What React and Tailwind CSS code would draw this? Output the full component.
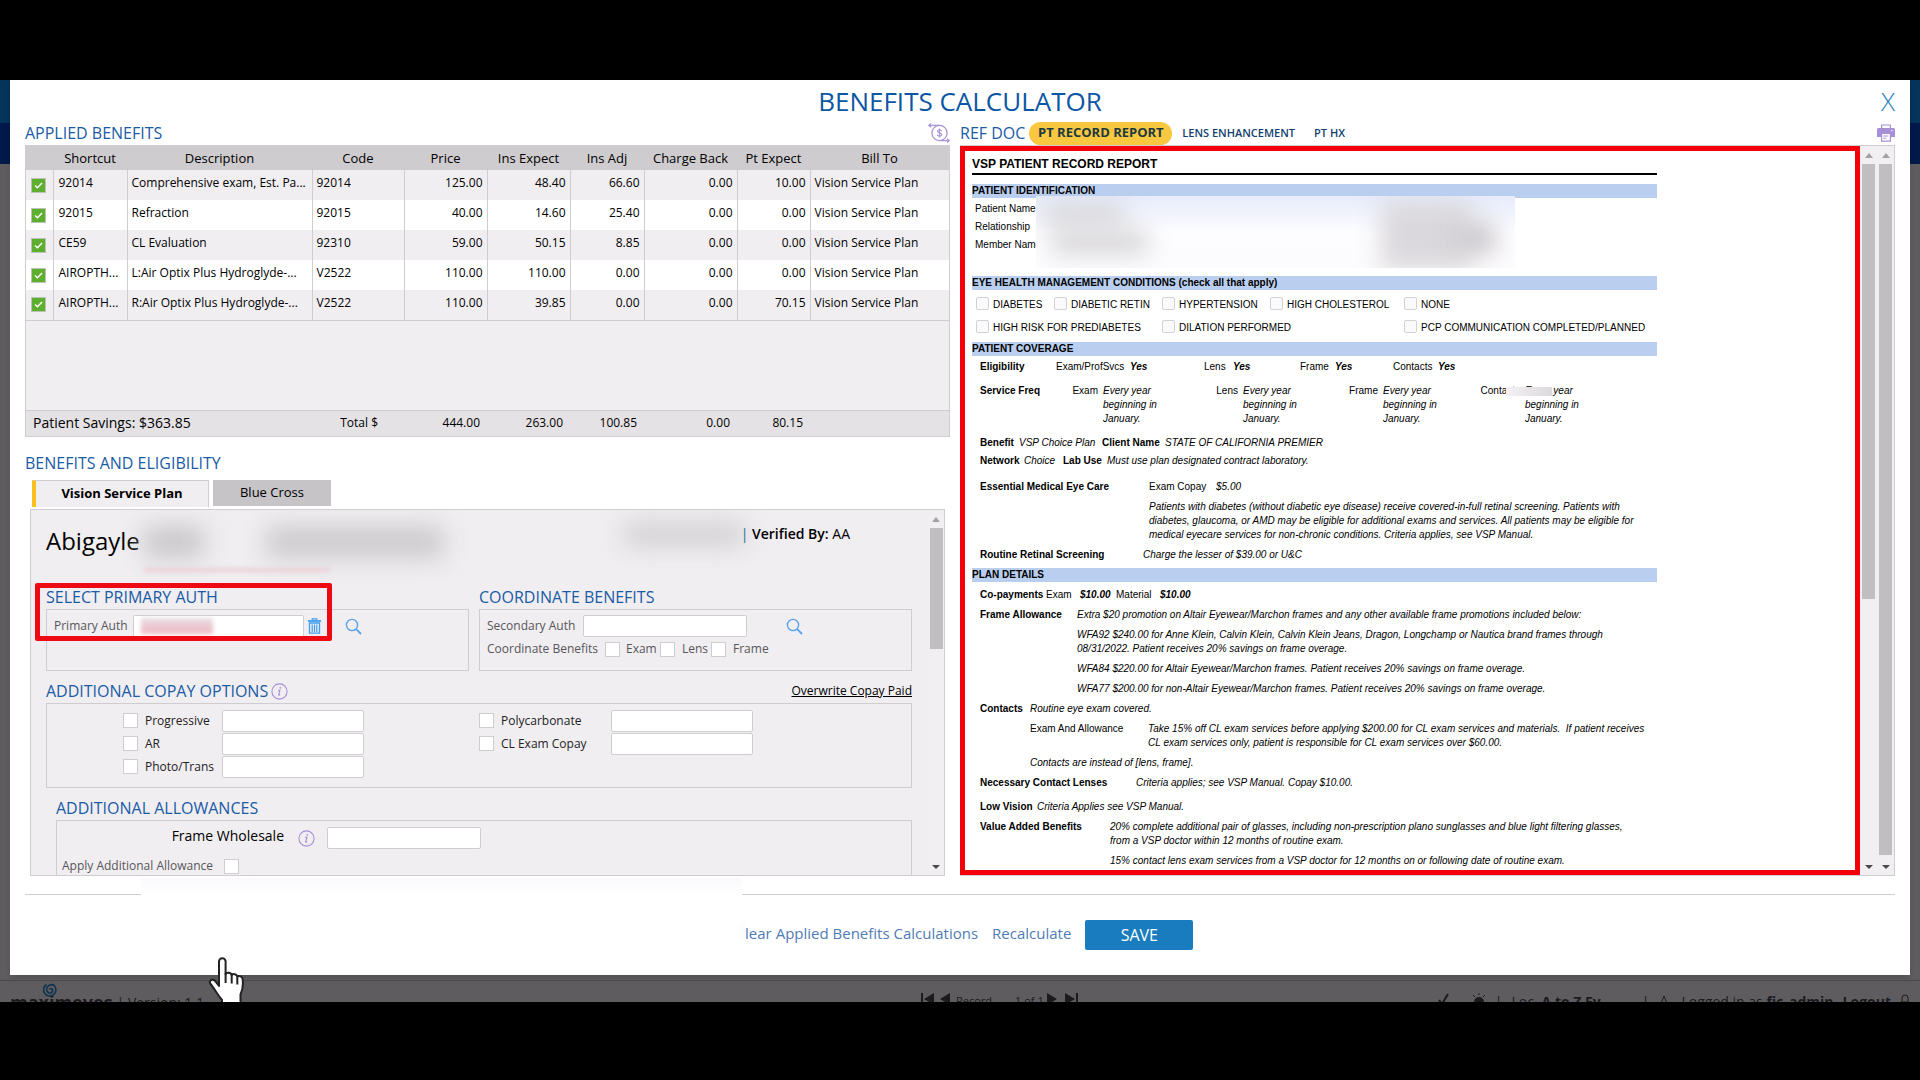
import { useState } from 'react'

const claimLines = [
    { shortcut: '92014', description: 'Comprehensive exam, Est. Pa...', code: '92014', amounts: ['125.00', '48.40', '66.60', '0.00', '10.00'] },
    { shortcut: '92015', description: 'Refraction', code: '92015', amounts: ['40.00', '14.60', '25.40', '0.00', '0.00'] },
    { shortcut: 'CE59', description: 'CL Evaluation', code: '92310', amounts: ['59.00', '50.15', '8.85', '0.00', '0.00'] },
    { shortcut: 'AIROPTH...', description: 'L:Air Optix Plus Hydroglyde-...', code: 'V2522', amounts: ['110.00', '110.00', '0.00', '0.00', '0.00'] },
    { shortcut: 'AIROPTH...', description: 'R:Air Optix Plus Hydroglyde-...', code: 'V2522', amounts: ['110.00', '39.85', '0.00', '0.00', '70.15'] },
]

const columns = [
    { label: '', width: 'w-[27px]' },
    { label: 'Shortcut', width: 'w-[74px]' },
    { label: 'Description', width: 'w-[185px]' },
    { label: 'Code', width: 'w-[92px]' },
    { label: 'Price', width: 'w-[83px]' },
    { label: 'Ins Expect', width: 'w-[83px]' },
    { label: 'Ins Adj', width: 'w-[74px]' },
    { label: 'Charge Back', width: 'w-[93px]' },
    { label: 'Pt Expect', width: 'w-[73px]' },
    { label: 'Bill To', width: '' },
]

const totals = ['444.00', '263.00', '100.85', '0.00', '80.15']

function CheckBox({ className = '', ...props }) {
    return (
        <input
            type="checkbox"
            className={`size-[15px] shrink-0 appearance-none border border-[#cfcdd0] bg-white ${className}`}
            {...props}
        />
    )
}

function LineCheck({ label }) {
    const [checked, setChecked] = useState(true)
    return (
        <span className="grid size-[15px] place-items-center">
            <input
                type="checkbox"
                aria-label={label}
                checked={checked}
                onChange={(e) => setChecked(e.target.checked)}
                className="col-start-1 row-start-1 size-[15px] appearance-none border border-[#b9c4b4] bg-white checked:bg-[#5eae2f]"
            />
            {checked && (
                <svg viewBox="0 0 10 8" className="pointer-events-none col-start-1 row-start-1 h-[7px] w-[9px]" fill="none" stroke="#fff" strokeWidth="1.6">
                    <path d="M1 4l2.8 2.6L9 1.2" />
                </svg>
            )}
        </span>
    )
}

function TextBox({ className = '', ...props }) {
    return <input type="text" className={`h-[22px] rounded-xs border border-[#cfcdd0] bg-white px-1 text-xs ${className}`} {...props} />
}

function Heading({ children }) {
    return <h2 className="text-base leading-6 whitespace-nowrap text-[#1a5ba6]">{children}</h2>
}

function InfoIcon() {
    return (
        <svg viewBox="0 0 17 17" className="size-[17px] shrink-0" fill="none" stroke="#a78fd8">
            <circle cx="8.5" cy="8.5" r="7.6" strokeWidth="1.1" />
            <path d="M7 7.2h1.9l-1.2 4.6c-.1.5.5.5 1.3-.2" strokeWidth="1.1" />
            <circle cx="9.3" cy="4.8" r=".6" fill="#a78fd8" strokeWidth=".6" />
        </svg>
    )
}

function SearchIcon() {
    return (
        <svg viewBox="0 0 17 17" className="size-[17px]" fill="none" stroke="#5aa2ec" strokeWidth="1.4">
            <circle cx="7" cy="7" r="5.6" />
            <path d="M11.2 11.2l4.8 4.8" strokeWidth="1.8" />
        </svg>
    )
}

function TrashIcon() {
    return (
        <svg viewBox="0 0 13 16" className="h-4 w-[13px]" fill="none" stroke="#3f9fee">
            <path d="M4.2 2.2V.8h4.6v1.4" strokeWidth="1.2" />
            <path d="M0 3h13" strokeWidth="1.8" />
            <path d="M1.5 5v10.2h10V5z" strokeWidth="1.3" />
            <path d="M4.2 6.5v7.5M6.5 6.5v7.5M8.8 6.5v7.5" strokeWidth="1.2" />
        </svg>
    )
}

function DollarCycleIcon() {
    return (
        <svg viewBox="0 0 22 20" className="h-5 w-[22px]" fill="none" stroke="#a893d6" strokeWidth="1.3">
            <circle cx="11.500" cy="10" r="7.600" />
            <path d="M1 2.400h10.500M11.500 17.600H21" />
            <path d="M3 .5L.8 2.400 3 4.300M19 15.700l2.200 1.900-2.200 1.900" />
            <path d="M13.600 8.200c-.3-1-1.100-1.400-2.100-1.400s-2 .5-2 1.500c0 2.200 4.200 1 4.200 3.300 0 1.100-1 1.600-2.200 1.600-1.100 0-2-.5-2.300-1.500M11.500 5.400v9.200" strokeWidth="1.100" />
        </svg>
    )
}

function PrinterIcon() {
    return (
        <svg viewBox="0 0 18 18" className="size-[18px]">
            <path d="M4.600 5V1h8.800v4" fill="#fff" stroke="#a78fd8" strokeWidth="1.200" />
            <path d="M0 5.500Q0 4 1.500 4h15Q18 4 18 5.500V13H0z" fill="#a78fd8" />
            <path d="M4.600 9.500h8.800v7.700H4.600z" fill="#fff" stroke="#a78fd8" strokeWidth="1.200" />
            <path d="M6.300 12h5M6.300 14.200h3" stroke="#a78fd8" />
            <path d="M14 6.600h1.500" stroke="#fff" />
        </svg>
    )
}

function ScrollBar({ thumb, className = '' }) {
    return (
        <div aria-hidden="true" className={`flex shrink-0 flex-col items-center bg-[#f1eff2] ${className}`}>
            <svg viewBox="0 0 8 18" className="h-[18px] w-2" fill="#a3a1a4">
                <path d="M4 7l4 5H0z" />
            </svg>
            <div className="w-[13px] flex-1">
                <div className={`bg-[#c0bec1] ${thumb}`} />
            </div>
            <svg viewBox="0 0 8 20" className="h-5 w-2" fill="#4b494c">
                <path d="M0 10h8l-4 4z" />
            </svg>
        </div>
    )
}

function AppliedBenefits() {
    return (
        <section>
            <div className="flex h-6 items-center justify-between">
                <Heading>APPLIED BENEFITS</Heading>
                <button type="button" aria-label="Payment history">
                    <DollarCycleIcon />
                </button>
            </div>
            <div className="flex h-[292px] flex-col border border-[#cfcdd0] bg-[#f0eef1] text-xs text-black">
                <table className="w-full table-fixed border-collapse">
                    <thead>
                        <tr className="h-[24px] bg-[#cfcccf]">
                            {columns.map((col) => (
                                <th key={col.label} className={`${col.width} p-0 pt-[2px] text-[13px] font-medium whitespace-nowrap`}>{col.label}</th>
                            ))}
                        </tr>
                    </thead>
                    <tbody>
                        {claimLines.map((line, i) => (
                            <tr key={i} className="h-[30px] border-[#cfcdd0] last:border-b odd:bg-[#f0eef1] even:bg-white">
                                <td className="border-r border-[#cfcdd0] pl-[5px]">
                                    <LineCheck label={`Apply ${line.description}`} />
                                </td>
                                <td className="border-r border-[#cfcdd0] pb-1 pl-[5px] whitespace-nowrap">{line.shortcut}</td>
                                <td className="border-r border-[#cfcdd0] pb-1 pl-1 whitespace-nowrap">{line.description}</td>
                                <td className="border-r border-[#cfcdd0] pb-1 pl-1">{line.code}</td>
                                {line.amounts.map((amount, j) => (
                                    <td key={j} className="border-r border-[#cfcdd0] pr-1 pb-1 text-right">{amount}</td>
                                ))}
                                <td className="pb-1 pl-1 whitespace-nowrap">Vision Service Plan</td>
                            </tr>
                        ))}
                    </tbody>
                </table>
                <table className="mt-auto w-full table-fixed border-t border-[#cfcdd0] bg-[#e4e2e5]">
                    <tbody>
                        <tr className="h-[26px]">
                            <td className="w-[286px] pl-[7px] text-sm">Patient Savings: $363.85</td>
                            <td className="w-[92px] pr-[26px] text-right">Total $</td>
                            {totals.map((total, i) => (
                                <td key={i} className={`${columns[i + 4].width} pr-[7px] text-right`}>{total}</td>
                            ))}
                            <td />
                        </tr>
                    </tbody>
                </table>
            </div>
        </section>
    )
}

function CopayOption({ id, label, labelWidth }) {
    return (
        <div className="flex h-[23px] items-center">
            <div className={`flex items-center gap-[7px] ${labelWidth}`}>
                <CheckBox id={id} />
                <label htmlFor={id} className="whitespace-nowrap text-[#222]">{label}</label>
            </div>
            <TextBox aria-label={`${label} copay`} className="w-[142px]" />
        </div>
    )
}

function PlanForm() {
    return (
        <div className="min-w-0 flex-1 overflow-hidden pr-4 pl-[15px] text-xs text-[#58565a]">
            <div className="relative flex h-[75px] items-start justify-between pt-[15px] pr-[62px]">
                {/* masked member details */}
                <div className="absolute top-4 left-[98px] h-8 w-[60px] bg-[#c9c7ca] blur-md" />
                <div className="absolute top-4 left-[220px] h-8 w-[178px] bg-[#cccacd] blur-md" />
                <div className="absolute top-3 left-[578px] h-6 w-[120px] bg-[#d2d0d3] blur-md" />
                <div className="absolute top-[58px] left-[98px] h-1 w-[186px] bg-[#eccfd4] blur-[2px]" />
                <span className="text-2xl leading-8 text-black">Abigayle</span>
                <span className="relative -mt-[3px] text-sm leading-6 whitespace-nowrap text-black">
                    <span className="text-[#23718c]">|</span> <b className="font-semibold">Verified By:</b> AA
                </span>
            </div>

            <div className="grid grid-cols-[423fr_433fr] gap-[10px]">
                <section className="relative">
                    <Heading>SELECT PRIMARY AUTH</Heading>
                    <div className="h-[62px] border border-[#cfcdd0] pt-[5px] pl-[7px]">
                        <div className="flex h-[22px] items-center">
                            <label htmlFor="primary-auth" className="w-[79px] whitespace-nowrap">Primary Auth</label>
                            <div className="relative flex">
                                <TextBox id="primary-auth" className="w-[171px]" />
                                <div className="absolute top-[3px] left-2 h-4 w-[72px] bg-linear-to-b from-[#e6dfe3] to-[#f0b6c0] blur-[2px]" />
                            </div>
                            <button type="button" aria-label="Remove primary auth" className="ml-1"><TrashIcon /></button>
                            <button type="button" aria-label="Find primary auth" className="ml-6"><SearchIcon /></button>
                        </div>
                    </div>
                    <div className="pointer-events-none absolute -top-[2px] -left-[11px] h-[58px] w-[297px] rounded-xs border-5 border-[#ee0a14]" />
                </section>
                <section>
                    <Heading>COORDINATE BENEFITS</Heading>
                    <div className="h-[62px] border border-[#cfcdd0] pt-[5px] pl-[7px]">
                        <div className="flex h-[22px] items-center">
                            <label htmlFor="secondary-auth" className="w-[96px] whitespace-nowrap">Secondary Auth</label>
                            <TextBox id="secondary-auth" className="w-[164px]" />
                            <button type="button" aria-label="Find secondary auth" className="ml-[39px]"><SearchIcon /></button>
                        </div>
                        <div className="flex h-6 items-center whitespace-nowrap">
                            <span className="w-[118px]">Coordinate Benefits</span>
                            <label className="flex w-[55px] items-center gap-[6px]"><CheckBox />Exam</label>
                            <label className="flex w-[51px] items-center gap-[7px]"><CheckBox />Lens</label>
                            <label className="flex items-center gap-[7px]"><CheckBox />Frame</label>
                        </div>
                    </div>
                </section>
            </div>

            <section className="mt-2">
                <div className="flex h-6 items-center gap-[3px]">
                    <Heading>ADDITIONAL COPAY OPTIONS</Heading>
                    <InfoIcon />
                    <a href="#overwrite" className="ml-auto text-black underline">Overwrite Copay Paid</a>
                </div>
                <div className="grid h-[85px] grid-cols-2 border border-[#cfcdd0] pt-[5px]">
                    <div className="pl-[76px]">
                        <CopayOption id="progressive" label="Progressive" labelWidth="w-[99px]" />
                        <CopayOption id="ar" label="AR" labelWidth="w-[99px]" />
                        <CopayOption id="photo" label="Photo/Trans" labelWidth="w-[99px]" />
                    </div>
                    <div>
                        <CopayOption id="poly" label="Polycarbonate" labelWidth="w-[132px]" />
                        <CopayOption id="cl-exam" label="CL Exam Copay" labelWidth="w-[132px]" />
                    </div>
                </div>
            </section>

            <section className="mt-2 pl-[10px]">
                <Heading>ADDITIONAL ALLOWANCES</Heading>
                <div className="h-[120px] border border-[#cfcdd0] pt-[6px] pl-[5px]">
                    <div className="flex h-[22px] items-center">
                        <label htmlFor="wholesale" className="w-[222px] pb-1 text-right text-sm font-medium text-black">Frame Wholesale</label>
                        <span className="ml-[14px]"><InfoIcon /></span>
                        <TextBox id="wholesale" className="ml-[12px] w-[154px]" />
                    </div>
                    <label className="mt-2 flex h-[18px] items-center gap-[11px]">
                        Apply Additional Allowance <CheckBox />
                    </label>
                </div>
            </section>
        </div>
    )
}

function BenefitsAndEligibility() {
    return (
        <section className="flex min-h-0 flex-1 flex-col pt-[14px]">
            <Heading>BENEFITS AND ELIGIBILITY</Heading>
            <div role="tablist" className="mt-[5px] flex h-[27px] items-start gap-1 pl-[7px] text-[13px] text-black">
                <button type="button" role="tab" aria-selected="true" className="h-[27px] w-[177px] border-t border-r border-l-4 border-[#cfcdd0] border-l-[#f7c11f] bg-[#f0eef1] font-bold">
                    Vision Service Plan
                </button>
                <button type="button" role="tab" aria-selected="false" className="h-[26px] w-[118px] bg-[#c6c4c6]">Blue Cross</button>
            </div>
            <div className="mt-[2px] mr-[5px] ml-[5px] flex min-h-0 flex-1 border border-[#cfcdd0] bg-[#f0eef1]">
                <PlanForm />
                <ScrollBar thumb="h-[37%]" className="w-4" />
            </div>
        </section>
    )
}

function Band({ children, className = '' }) {
    return <h3 className={`h-[14px] bg-[#bacfef] font-bold whitespace-nowrap ${className}`}>{children}</h3>
}

function ReportRow({ label, width, className = 'mt-[6px]', children }) {
    return (
        <div className={`flex pl-2 whitespace-nowrap ${className}`}>
            <b className={`shrink-0 ${width}`}>{label}</b>
            {children}
        </div>
    )
}

function Condition({ children }) {
    return (
        <label className="flex h-[23px] items-center gap-1 whitespace-nowrap">
            <input type="checkbox" className="mb-[2px] size-[13px] shrink-0 appearance-none rounded-xs border border-[#d3d1d4] bg-[#faf9fb]" />
            {children}
        </label>
    )
}

function ServiceFreq({ label, width }) {
    return (
        <div className={`flex justify-end gap-[5px] ${width}`}>
            <span>{label}</span>
            <i className="w-[56px]">Every year<br />beginning in<br />January.</i>
        </div>
    )
}

function Report() {
    return (
        <article className="w-[685px] font-['Liberation_Sans',sans-serif] text-[10px] leading-[14px] text-black">
            <h2 className="h-5 border-b-2 border-black text-xs leading-[18px] font-bold">VSP PATIENT RECORD REPORT</h2>
            <Band className="mt-[9px]">PATIENT IDENTIFICATION</Band>
            <div className="relative mt-[2px] pl-[3px] leading-[18px]">
                <p>Patient Name</p>
                <p>Relationship&nbsp; S</p>
                <p>Member Name</p>
                <div className="absolute -top-1 left-[64px] h-[72px] w-[479px] overflow-hidden bg-linear-to-b from-[#e6ecfb] via-[#fdfdff] to-[#fcfbfd]">
                    <div className="absolute top-2 left-2 h-5 w-20 bg-[#d5d3d6] blur-md" />
                    <div className="absolute top-9 left-4 h-5 w-24 bg-[#cfcdd0] blur-md" />
                    <div className="absolute top-1 left-[345px] h-[70px] w-[90px] bg-[#dad8dc] blur-md" />
                    <div className="absolute top-7 left-[420px] h-7 w-[40px] bg-[#c9c5ca] blur-md" />
                </div>
            </div>
            <Band className="mt-[22px]">EYE HEALTH MANAGEMENT CONDITIONS (check all that apply)</Band>
            <div className="mt-[3px] grid grid-cols-[78px_108px_108px_134px_1fr] pl-1">
                <Condition>DIABETES</Condition>
                <Condition>DIABETIC RETIN</Condition>
                <Condition>HYPERTENSION</Condition>
                <Condition>HIGH CHOLESTEROL</Condition>
                <Condition>NONE</Condition>
                <div className="col-span-2"><Condition>HIGH RISK FOR PREDIABETES</Condition></div>
                <div className="col-span-2"><Condition>DILATION PERFORMED</Condition></div>
                <Condition>PCP COMMUNICATION COMPLETED/PLANNED</Condition>
            </div>
            <Band className="mt-[3px]">PATIENT COVERAGE</Band>
            <ReportRow label="Eligibility" width="w-[76px]" className="mt-1">
                <span className="w-[74px]">Exam/ProfSvcs</span><b className="w-[74px] italic">Yes</b>
                <span className="w-[29px]">Lens</span><b className="w-[67px] italic">Yes</b>
                <span className="w-[35px]">Frame</span><b className="w-[58px] italic">Yes</b>
                <span className="w-[45px]">Contacts</span><b className="italic">Yes</b>
            </ReportRow>
            <ReportRow label="Service Freq" width="w-[61px]" className="relative mt-[10px]">
                <ServiceFreq label="Exam" width="w-[118px]" />
                <ServiceFreq label="Lens" width="w-[140px]" />
                <ServiceFreq label="Frame" width="w-[140px]" />
                <ServiceFreq label="Contacts" width="w-[142px]" />
                <div className="absolute top-[3px] left-[534px] h-[9px] w-[46px] bg-linear-to-r from-[#f4f2f5] to-[#dbd9dc]" />
            </ReportRow>
            <ReportRow label="Benefit" width="w-[39px]" className="mt-[10px]">
                <i className="w-[83px]">VSP Choice Plan</i><b className="w-[63px]">Client Name</b><i>STATE OF CALIFORNIA PREMIER</i>
            </ReportRow>
            <ReportRow label="Network" width="w-[44px]" className="mt-1">
                <i className="w-[39px]">Choice</i><b className="w-[44px]">Lab Use</b><i>Must use plan designated contract laboratory.</i>
            </ReportRow>
            <ReportRow label="Essential Medical Eye Care" width="w-[169px]" className="mt-3">
                <div>
                    <p>Exam Copay <i className="ml-[7px]">$5.00</i></p>
                    <p className="mt-[6px] italic">
                        Patients with diabetes (without diabetic eye disease) receive covered-in-full retinal screening. Patients with<br />
                        diabetes, glaucoma, or AMD may be eligible for additional exams and services. All patients may be eligible for<br />
                        medical eyecare services for non-chronic conditions. Criteria applies, see VSP Manual.
                    </p>
                </div>
            </ReportRow>
            <ReportRow label="Routine Retinal Screening" width="w-[163px]"><i>Charge the lesser of $39.00 or U&amp;C</i></ReportRow>
            <Band className="mt-[6px]">PLAN DETAILS</Band>
            <ReportRow label="Co-payments" width="w-[66px]">
                <span className="w-[34px]">Exam</span><b className="w-[36px] italic">$10.00</b>
                <span className="w-[44px]">Material</span><b className="italic">$10.00</b>
            </ReportRow>
            <ReportRow label="Frame Allowance" width="w-[97px]">
                <div className="space-y-[6px] italic">
                    <p>Extra $20 promotion on Altair Eyewear/Marchon frames and any other available frame promotions included below:</p>
                    <p>
                        WFA92 $240.00 for Anne Klein, Calvin Klein, Calvin Klein Jeans, Dragon, Longchamp or Nautica brand frames through<br />
                        08/31/2022. Patient receives 20% savings on frame overage.
                    </p>
                    <p>WFA84 $220.00 for Altair Eyewear/Marchon frames. Patient receives 20% savings on frame overage.</p>
                    <p>WFA77 $200.00 for non-Altair Eyewear/Marchon frames. Patient receives 20% savings on frame overage.</p>
                </div>
            </ReportRow>
            <ReportRow label="Contacts" width="w-[50px]">
                <div className="space-y-[6px] italic">
                    <p>Routine eye exam covered.</p>
                    <div className="flex">
                        <span className="w-[118px] not-italic">Exam And Allowance</span>
                        <p>
                            Take 15% off CL exam services before applying $200.00 for CL exam services and materials.&nbsp; If patient receives<br />
                            CL exam services only, patient is responsible for CL exam services over $60.00.
                        </p>
                    </div>
                    <p>Contacts are instead of [lens, frame].</p>
                </div>
            </ReportRow>
            <ReportRow label="Necessary Contact Lenses" width="w-[156px]"><i>Criteria applies; see VSP Manual. Copay $10.00.</i></ReportRow>
            <ReportRow label="Low Vision" width="w-[57px]" className="mt-[10px]"><i>Criteria Applies see VSP Manual.</i></ReportRow>
            <ReportRow label="Value Added Benefits" width="w-[130px]">
                <div className="space-y-[6px] italic">
                    <p>
                        20% complete additional pair of glasses, including non-prescription plano sunglasses and blue light filtering glasses,<br />
                        from a VSP doctor within 12 months of routine exam.
                    </p>
                    <p>15% contact lens exam services from a VSP doctor for 12 months on or following date of routine exam.</p>
                </div>
            </ReportRow>
        </article>
    )
}

function RefDoc() {
    return (
        <section className="flex min-h-0 min-w-0 flex-col">
            <div className="flex h-6 shrink-0 items-center text-[#123f6d]">
                <Heading>REF DOC</Heading>
                <button type="button" className="ml-1 h-[23px] w-[143px] rounded-full bg-[#f9c740] text-[13px] font-bold text-[#1c3a3f]">PT RECORD REPORT</button>
                <button type="button" className="ml-[10px] text-[11px] font-semibold">LENS ENHANCEMENT</button>
                <button type="button" className="ml-[19px] text-[11px] font-semibold">PT HX</button>
                <button type="button" aria-label="Print" className="ml-auto"><PrinterIcon /></button>
            </div>
            <div className="flex min-h-0 flex-1 border-t border-r border-b border-[#cfcdd0]">
                <div className="relative min-w-0 flex-1 overflow-hidden bg-white pt-[9px] pl-3">
                    <Report />
                    <div className="pointer-events-none absolute inset-0 border-5 border-[#f4000a]" />
                </div>
                <ScrollBar thumb="h-[63%]" className="w-[17px]" />
                <ScrollBar thumb="h-full" className="w-[17px]" />
            </div>
        </section>
    )
}

function StatusBar() {
    return (
        <footer className="relative flex h-[27px] items-start overflow-hidden px-[10px] pt-[6px] text-sm whitespace-nowrap text-[#1b1a1c]">
            <div className="absolute inset-x-0 top-[5px] border-t border-[#4a484b]" />
            <div className="flex w-[911px] items-start">
                <span className="mt-[9px] text-lg leading-6 font-bold">maximeyes</span>
                <span className="mt-3 ml-1">| Version: 1.1</span>
                <svg viewBox="0 0 14 14" className="absolute top-2 left-[43px] size-[14px]" fill="none" stroke="#0d3350" strokeWidth="1.6">
                    <path d="M3.500 1.500A6.200 6.200 0 1 0 11 2.300 5 5 0 0 0 3.600 6 3.700 3.700 0 0 0 7 10.200 3 3 0 0 0 9.600 6.600 2 2 0 0 0 6.600 6.300" />
                </svg>
            </div>
            <div className="mt-3 flex items-start gap-[3px] text-[11px]">
                <svg viewBox="0 0 32 12" className="h-3 w-8" fill="currentColor">
                    <path d="M0 0h2v12H0zM13 0v12L3 6zM29 0v12L19 6z" />
                </svg>
                <span>Record</span>
                <span className="ml-5">1 of 1</span>
                <svg viewBox="0 0 32 12" className="h-3 w-8" fill="currentColor">
                    <path d="M0 0v12l10-6zM18 0v12l10-6zM29 0h2v12h-2z" />
                </svg>
            </div>
            <div className="mt-[11px] ml-auto flex items-start gap-[9px]">
                <svg viewBox="0 0 48 16" className="h-4 w-12" fill="none" stroke="currentColor" strokeWidth="2">
                    <path d="M1 8l3 4 6-10" />
                    <path d="M41 1v2M35 3l2 2M47 3l-2 2" strokeWidth="1" />
                    <circle cx="41" cy="10" r="4" fill="currentColor" />
                </svg>
                <span>|</span>
                <span>Loc <b className="ml-1">A to Z Ey</b></span>
                <span className="ml-8">|</span>
                <svg viewBox="0 0 10 12" className="mt-[3px] h-3 w-[10px]" fill="none" stroke="currentColor"><path d="M5 1l4 10H1z" /></svg>
                <span className="ml-1">Logged in as <b>fic_admin</b></span>
                <button type="button" className="font-bold">Logout</button>
                <svg viewBox="0 0 10 14" className="mt-[2px] h-[14px] w-[10px]" fill="none" stroke="currentColor"><path d="M2 8V4a3 3 0 0 1 6 0v4M1 8h8v5H1z" /></svg>
            </div>
        </footer>
    )
}

function HandCursor() {
    return (
        <svg viewBox="0 0 40 50" className="pointer-events-none absolute bottom-[-5px] left-[208px] h-[50px] w-10" fill="#fff" stroke="#222" strokeWidth="2" strokeLinejoin="round">
            <path d="M11 29V4.500a3.300 3.300 0 0 1 6.600 0V17c1-2 5.500-1.600 6 1 1.500-1.600 5-.9 5.600 1.600 2-1.200 5-.2 5.400 2.400.9 6-.1 11-2.100 15.500V49H14v-6C9 37 6 31 2.200 26.500c-1.300-2.500 1.500-5 4.500-3.200z" />
            <path d="M17.600 16v10M23.700 18v8.500M29.300 20v7.500" fill="none" />
        </svg>
    )
}

export default function App() {
    return (
        <div className="h-screen min-h-[900px] bg-black pt-20 pb-[78px] font-['Open_Sans','Noto_Sans',sans-serif]">
            <div className="relative flex h-full flex-col overflow-hidden bg-[#5e5c5f]">
                <div className="absolute inset-x-0 top-0">
                    <div className="h-[43px] bg-[#04345a]" />
                    <div className="h-[41px] bg-[#00194a]" />
                </div>
                <main role="dialog" aria-label="Benefits calculator" className="relative mx-[10px] flex min-h-0 flex-1 flex-col bg-white px-[15px] shadow-md">
                    <header className="grid h-[41px] shrink-0 grid-cols-[1fr_auto_1fr] items-center">
                        <h1 className="col-start-2 text-[26px] leading-8 font-medium text-[#0b57a4]">BENEFITS CALCULATOR</h1>
                        <button type="button" aria-label="Close" className="justify-self-end text-[26px] leading-8 font-light text-[#2b7fc0]">X</button>
                    </header>
                    <div className="grid min-h-0 flex-1 grid-cols-[925fr_935fr] grid-rows-[minmax(0,1fr)] gap-[10px]">
                        <div className="flex min-h-0 min-w-0 flex-col">
                            <AppliedBenefits />
                            <BenefitsAndEligibility />
                        </div>
                        <RefDoc />
                    </div>
                    <div className="relative mt-[18px] flex h-[81px] shrink-0 items-center border-t border-[#cfcdd0]">
                        <div className="absolute -top-[17px] left-[116px] h-[40px] w-[601px] bg-linear-to-b from-[#faf8fb] to-white to-40%" />
                        <div className="flex w-full items-center justify-center gap-[14px] pl-[9px] text-[15px] text-[#4f7cb4]">
                            <button type="button" className="relative pb-1">
                                Clear Applied Benefits Calculations
                                <span className="absolute top-0 left-0 h-[18px] w-[9px] bg-linear-to-r from-white to-[#fbfafd]" />
                            </button>
                            <button type="button" className="pb-1">Recalculate</button>
                            <button type="button" className="h-[30px] w-[108px] rounded-xs bg-[#187cbe] text-base text-white">SAVE</button>
                        </div>
                    </div>
                </main>
                <StatusBar />
                <HandCursor />
            </div>
        </div>
    )
}
